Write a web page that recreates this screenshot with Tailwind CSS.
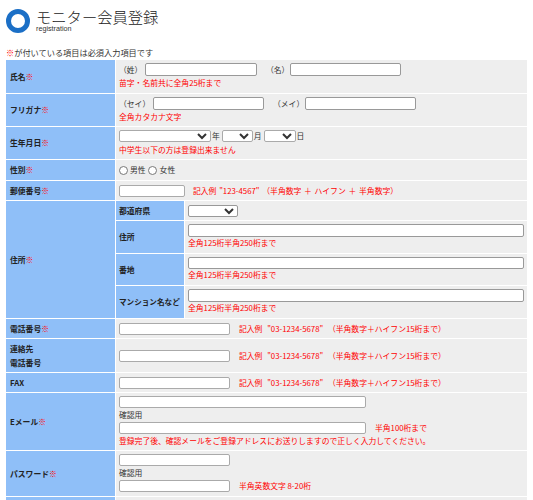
<!DOCTYPE html>
<html lang="ja">
<head>
<meta charset="utf-8">
<script src="https://cdn.jsdelivr.net/npm/@tailwindcss/browser@4"></script>
</head>
<body class="bg-white h-[500px] overflow-hidden font-['Noto_Sans_CJK_JP','Noto_Sans',sans-serif] text-[7.8px] leading-[12px] text-[#333]">
<div class="flex items-start gap-[6px] pl-[6px] pt-[8px] h-[46px]">
  <svg class="w-[24px] h-[25px] mt-[1px]" viewBox="0 0 24 25"><circle cx="12" cy="12" r="9.5" fill="none" stroke="#1b6fc6" stroke-width="5"/></svg>
  <div>
    <div class="text-[15.3px] leading-[17px] font-light text-[#222]">モニター会員登録</div>
    <div class="text-[7.2px] leading-[8px] text-[#333] font-['Liberation_Sans']">registration</div>
  </div>
</div>
<div class="pl-[6px] h-[14px] leading-[12px] text-[8.2px] text-[#333]"><span class="text-[#f00]">※</span>が付いている項目は必須入力項目です</div>
<div class="ml-[6px] w-[521px] flex flex-col gap-px">

  <div class="flex gap-px h-[33px]">
    <div class="w-[109px] bg-[#8fbff8] flex items-center pl-[4px] font-bold text-[#222]">氏名<span class="text-[#f00]">※</span></div>
    <div class="flex-1 bg-[#eee] pl-[3px] pt-[3px]">
      <div class="flex items-center h-[13px]"><span class="w-[26px]">（姓）</span><input class="w-[112px] h-[13px] bg-white border border-[#999] rounded-[2px]"><span class="ml-[9px] w-[24px]">（名）</span><input class="w-[111px] h-[13px] bg-white border border-[#999] rounded-[2px]"></div>
      <div class="text-[#f00] mt-px">苗字・名前共に全角25桁まで</div>
    </div>
  </div>

  <div class="flex gap-px h-[32px]">
    <div class="w-[109px] bg-[#8fbff8] flex items-center pl-[4px] font-bold text-[#222]">フリガナ<span class="text-[#f00]">※</span></div>
    <div class="flex-1 bg-[#eee] pl-[3px] pt-[3px]">
      <div class="flex items-center h-[13px]"><span class="w-[34px]">（セイ）</span><input class="w-[111px] h-[13px] bg-white border border-[#999] rounded-[2px]"><span class="ml-[9px] w-[32px]">（メイ）</span><input class="w-[111px] h-[13px] bg-white border border-[#999] rounded-[2px]"></div>
      <div class="text-[#f00] mt-px">全角カタカナ文字</div>
    </div>
  </div>

  <div class="flex gap-px h-[32px]">
    <div class="w-[109px] bg-[#8fbff8] flex items-center pl-[4px] font-bold text-[#222]">生年月日<span class="text-[#f00]">※</span></div>
    <div class="flex-1 bg-[#eee] pl-[3px] pt-[3px]">
      <div class="flex items-center h-[12px]"><select class="w-[92px] h-[12px] bg-white border border-[#aaa] rounded-[2px] appearance-auto"></select><span class="mx-[1px]">年</span><select class="w-[31px] h-[12px] ml-[1px] bg-white border border-[#aaa] rounded-[2px] appearance-auto"></select><span class="mx-[1px]">月</span><select class="w-[32px] h-[12px] ml-[1px] bg-white border border-[#aaa] rounded-[2px] appearance-auto"></select><span class="ml-[1px]">日</span></div>
      <div class="text-[#f00] mt-[2px]">中学生以下の方は登録出来ません</div>
    </div>
  </div>

  <div class="flex gap-px h-[20px]">
    <div class="w-[109px] bg-[#8fbff8] flex items-center pl-[4px] font-bold text-[#222]">性別<span class="text-[#f00]">※</span></div>
    <div class="flex-1 bg-[#eee] pl-[3px] flex items-center"><input type="radio" class="w-[9px] h-[9px] appearance-auto"><span class="ml-[2px]">男性</span><input type="radio" class="ml-[2px] w-[9px] h-[9px] appearance-auto"><span class="ml-[3px]">女性</span></div>
  </div>

  <div class="flex gap-px h-[19px]">
    <div class="w-[109px] bg-[#8fbff8] flex items-center pl-[4px] font-bold text-[#222]">郵便番号<span class="text-[#f00]">※</span></div>
    <div class="flex-1 bg-[#eee] pl-[3px] flex items-center"><input class="w-[66px] h-[12px] bg-white border border-[#aaa] rounded-[2px]"><span class="ml-[8px] text-[#f00] [word-spacing:1px]">記入例 "123-4567" （半角数字 ＋ ハイフン ＋ 半角数字）</span></div>
  </div>

  <div class="flex gap-px h-[117px]">
    <div class="w-[109px] bg-[#8fbff8] flex items-center pl-[4px] font-bold text-[#222]">住所<span class="text-[#f00]">※</span></div>
    <div class="flex-1 flex flex-col gap-px">
      <div class="flex gap-px h-[19px]">
        <div class="w-[68px] bg-[#8fbff8] flex items-center pl-[3px] font-bold text-[#222]">都道府県</div>
        <div class="flex-1 bg-[#eee] pl-[3px] flex items-center"><select class="w-[50px] h-[12px] bg-white border border-[#999] rounded-[2px] appearance-auto"></select></div>
      </div>
      <div class="flex gap-px h-[32px]">
        <div class="w-[68px] bg-[#8fbff8] flex items-center pl-[3px] font-bold text-[#222]">住所</div>
        <div class="flex-1 bg-[#eee] pl-[3px] pt-[3px]"><input class="block w-[336px] h-[13px] bg-white border border-[#999] rounded-[2px]"><div class="text-[#f00]">全角125桁半角250桁まで</div></div>
      </div>
      <div class="flex gap-px h-[31px]">
        <div class="w-[68px] bg-[#8fbff8] flex items-center pl-[3px] font-bold text-[#222]">番地</div>
        <div class="flex-1 bg-[#eee] pl-[3px] pt-[3px]"><input class="block w-[336px] h-[12px] bg-white border border-[#999] rounded-[2px]"><div class="text-[#f00]">全角125桁半角250桁まで</div></div>
      </div>
      <div class="flex gap-px flex-1">
        <div class="w-[68px] bg-[#8fbff8] flex items-center pl-[3px] font-bold text-[#222] whitespace-nowrap text-[7.6px]">マンション名など</div>
        <div class="flex-1 bg-[#eee] pl-[3px] pt-[3px]"><input class="block w-[336px] h-[13px] bg-white border border-[#999] rounded-[2px]"><div class="text-[#f00]">全角125桁半角250桁まで</div></div>
      </div>
    </div>
  </div>

  <div class="flex gap-px h-[19px]">
    <div class="w-[109px] bg-[#8fbff8] flex items-center pl-[4px] font-bold text-[#222]">電話番号<span class="text-[#f00]">※</span></div>
    <div class="flex-1 bg-[#eee] pl-[3px] flex items-center"><input class="w-[111px] h-[12px] bg-white border border-[#aaa] rounded-[2px]"><span class="ml-[9px] text-[#f00] [word-spacing:3px]">記入例 "03-1234-5678" （半角数字＋ハイフン15桁まで）</span></div>
  </div>

  <div class="flex gap-px h-[33px]">
    <div class="w-[109px] bg-[#8fbff8] flex items-center pl-[4px] font-bold text-[#222] leading-[14px]">連絡先<br>電話番号</div>
    <div class="flex-1 bg-[#eee] pl-[3px] flex items-center"><input class="w-[111px] h-[12px] bg-white border border-[#aaa] rounded-[2px]"><span class="ml-[9px] text-[#f00] [word-spacing:3px]">記入例 "03-1234-5678" （半角数字＋ハイフン15桁まで）</span></div>
  </div>

  <div class="flex gap-px h-[19px]">
    <div class="w-[109px] bg-[#8fbff8] flex items-center pl-[4px] font-bold text-[#222]">FAX</div>
    <div class="flex-1 bg-[#eee] pl-[3px] flex items-center"><input class="w-[111px] h-[12px] bg-white border border-[#aaa] rounded-[2px]"><span class="ml-[9px] text-[#f00] [word-spacing:3px]">記入例 "03-1234-5678" （半角数字＋ハイフン15桁まで）</span></div>
  </div>

  <div class="flex gap-px h-[57px]">
    <div class="w-[109px] bg-[#8fbff8] flex items-center pl-[4px] font-bold text-[#222]">Eメール<span class="text-[#f00]">※</span></div>
    <div class="flex-1 bg-[#eee] pl-[3px] pt-[3px]">
      <input class="block w-[247px] h-[12px] bg-white border border-[#aaa] rounded-[2px]">
      <div class="h-[14px] leading-[13px]">確認用</div>
      <div class="flex items-center"><input class="w-[247px] h-[12px] bg-white border border-[#aaa] rounded-[2px]"><span class="ml-[9px] text-[#f00]">半角100桁まで</span></div>
      <div class="text-[#f00] mt-px">登録完了後、確認メールをご登録アドレスにお送りしますので正しく入力してください。</div>
    </div>
  </div>

  <div class="flex gap-px h-[45px]">
    <div class="w-[109px] bg-[#8fbff8] flex items-center pl-[4px] font-bold text-[#222]">パスワード<span class="text-[#f00]">※</span></div>
    <div class="flex-1 bg-[#eee] pl-[3px] pt-[3px]">
      <input class="block w-[111px] h-[12px] bg-white border border-[#aaa] rounded-[2px]">
      <div class="h-[14px] leading-[14px]">確認用</div>
      <div class="flex items-center"><input class="w-[111px] h-[12px] bg-white border border-[#aaa] rounded-[2px]"><span class="ml-[9px] text-[#f00]">半角英数文字 8-20桁</span></div>
    </div>
  </div>

  <div class="flex gap-px h-[3px]">
    <div class="w-[109px] bg-[#8fbff8]"></div>
    <div class="flex-1 bg-[#eee]"></div>
  </div>
</div>
</body>
</html>
